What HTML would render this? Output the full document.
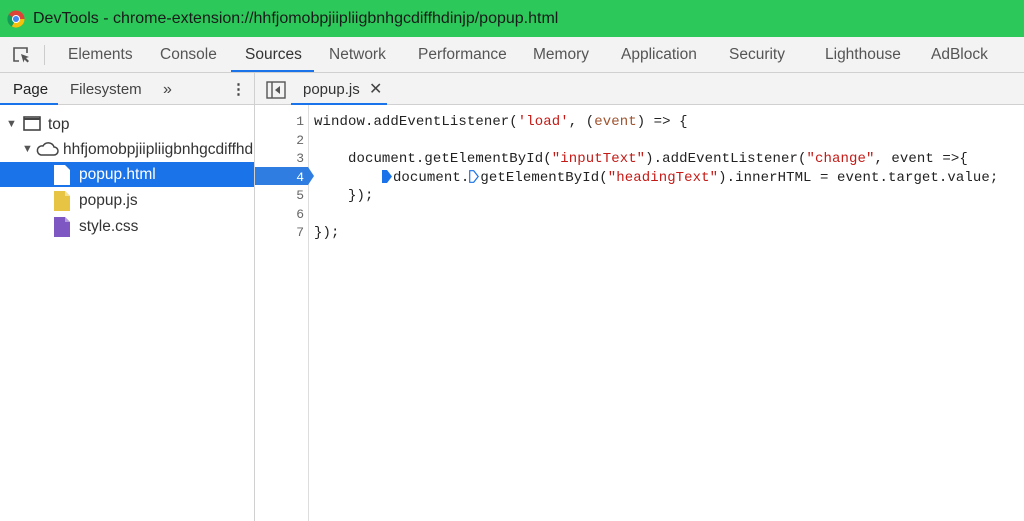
<!DOCTYPE html>
<html><head><style>
*{margin:0;padding:0;box-sizing:border-box}
body{width:1024px;height:521px;overflow:hidden;background:#fff;font-family:"Liberation Sans",sans-serif;position:relative}
.abs{position:absolute}
.title{left:0;top:0;width:1024px;height:37px;background:#2cc85a;color:#1a1a1a;font-size:16px;line-height:37px;padding-left:33px}
.tabs{left:0;top:37px;width:1024px;height:36px;background:#f3f3f3;border-bottom:1px solid #d0d0d0}
.tab{position:absolute;top:0;line-height:36px;font-size:15.5px;color:#555}
.row2{left:0;top:73px;width:1024px;height:32px;background:#f3f3f3;border-bottom:1px solid #d0d0d0}
.r2{position:absolute;top:0;line-height:33px;font-size:15px;color:#444}
.left{left:0;top:105px;width:255px;height:416px;border-right:1px solid #d0d0d0}
.tree{position:absolute;font-size:15.5px;color:#333;line-height:25px}
.code{font-family:"Liberation Mono",monospace;font-size:14px;letter-spacing:0.09px;color:#222;white-space:pre;position:absolute;left:314px;line-height:18.5px}
.ln{position:absolute;left:256px;width:48px;text-align:right;font-family:"Liberation Mono",monospace;font-size:13px;color:#666;line-height:18.5px}
.s{color:#c41a16}.k{color:#a0522d}
.mk{display:inline-block;width:10px;height:13px;vertical-align:-2px;margin-right:1px}
</style></head><body>
<div class="abs title">DevTools - chrome-extension://hhfjomobpjiipliigbnhgcdiffhdinjp/popup.html</div>
<svg class="abs" style="left:7px;top:10px" width="18" height="18" viewBox="0 0 18 18"><circle cx="9" cy="9" r="8.5" fill="#db4437"/><path d="M9 9 L17.5 9 A8.5 8.5 0 0 1 4.75 16.4Z" fill="#f4c20d"/><path d="M9 9 L4.75 16.4 A8.5 8.5 0 0 1 1.6 4.7Z" fill="#0f9d58"/><circle cx="9" cy="9" r="4" fill="#fff"/><circle cx="9" cy="9" r="3" fill="#4285f4"/></svg>
<div class="abs tabs">
<svg style="position:absolute;left:12px;top:9px" width="20" height="20" viewBox="0 0 20 20"><path d="M7 15H2V2h13v5" fill="none" stroke="#555" stroke-width="1.6"/><path d="M9 8l8 3-3 1 3 3-1.5 1.5-3-3-1 3z" fill="#555"/></svg>
<div style="position:absolute;left:44px;top:8px;width:1px;height:20px;background:#ccc"></div>
<div class="tab" style="left:68px">Elements</div>
<div class="tab" style="left:160px">Console</div>
<div class="tab" style="left:245px;color:#333">Sources</div>
<div style="position:absolute;left:231px;top:33px;width:83px;height:2px;background:#1a73e8"></div>
<div class="tab" style="left:329px">Network</div>
<div class="tab" style="left:418px">Performance</div>
<div class="tab" style="left:533px">Memory</div>
<div class="tab" style="left:621px">Application</div>
<div class="tab" style="left:729px">Security</div>
<div class="tab" style="left:825px">Lighthouse</div>
<div class="tab" style="left:931px">AdBlock</div>
</div>
<div class="abs row2">
<div class="r2" style="left:13px;color:#222">Page</div>
<div style="position:absolute;left:0;top:30px;width:58px;height:2px;background:#1a73e8"></div>
<div class="r2" style="left:70px">Filesystem</div>
<div class="r2" style="left:163px;font-size:16px">»</div>
<div class="r2" style="left:231px;font-weight:bold">⋮</div>
<div style="position:absolute;left:254px;top:0;width:1px;height:32px;background:#d0d0d0"></div>
<svg style="position:absolute;left:266px;top:8px" width="20" height="18" viewBox="0 0 20 18"><rect x="1" y="1" width="18" height="16" fill="none" stroke="#555" stroke-width="1.4"/><line x1="6" y1="1" x2="6" y2="17" stroke="#555" stroke-width="1.4"/><path d="M14 5v8l-5-4z" fill="#555"/></svg>
<div class="r2" style="left:303px;color:#333">popup.js</div>
<div class="r2" style="left:369px;font-size:16px;color:#444">✕</div>
<div style="position:absolute;left:291px;top:30px;width:96px;height:2px;background:#1a73e8"></div>
</div>
<div class="abs left"></div>
<div class="abs" style="left:0;top:162px;width:254px;height:25px;background:#1a73e8"></div>
<div class="tree" style="left:6px;top:112px;font-size:11px;color:#555">▼</div>
<svg class="abs" style="left:23px;top:116px" width="18" height="15"><rect x="1" y="1" width="16" height="13" fill="none" stroke="#444" stroke-width="1.6"/><line x1="1" y1="3" x2="17" y2="3" stroke="#444" stroke-width="2"/></svg>
<div class="tree" style="left:48px;top:112px">top</div>
<div class="tree" style="left:22px;top:137px;font-size:11px;color:#555">▼</div>
<svg class="abs" style="left:35px;top:141px" width="25" height="16"><path d="M6 14h13a4 4 0 0 0 0-8 6 6 0 0 0-11-1 4.5 4.5 0 0 0-2 9z" fill="none" stroke="#444" stroke-width="1.5"/></svg>
<div class="tree" style="left:63px;top:137px;width:191px;overflow:hidden;white-space:nowrap">hhfjomobpjiipliigbnhgcdiffhdinjp</div>
<svg class="abs" style="left:54px;top:165px" width="16" height="20"><path d="M0 0h11l5 5v15H0z" fill="#fff"/></svg>
<div class="tree" style="left:79px;top:162px;color:#fff">popup.html</div>
<svg class="abs" style="left:54px;top:191px" width="16" height="20"><path d="M0 0h11l5 5v15H0z" fill="#e8c444"/><path d="M11 0v5h5z" fill="#f5e29a"/></svg>
<div class="tree" style="left:79px;top:188px">popup.js</div>
<svg class="abs" style="left:54px;top:217px" width="16" height="20"><path d="M0 0h11l5 5v15H0z" fill="#7e57c2"/><path d="M11 0v5h5z" fill="#b39ddb"/></svg>
<div class="tree" style="left:79px;top:214px">style.css</div>
<div class="abs" style="left:308px;top:105px;width:1px;height:416px;background:#ddd"></div>
<svg class="abs" style="left:255px;top:167px" width="60" height="18"><path d="M0 0h53l6 9-6 9H0z" fill="#2f7de1"/></svg>
<div class="ln" style="top:113px">1<br>2<br>3<br><span style="color:#fff">4</span><br>5<br>6<br>7</div>
<div class="code" style="top:113px">window.addEventListener(<span class="s">'load'</span>, (<span class="k">event</span>) => {

    document.getElementById(<span class="s">"inputText"</span>).addEventListener(<span class="s">"change"</span>, event =>{
        <svg class="mk" viewBox="0 0 10 13"><path d="M0 0h5l5 6.5-5 6.5H0z" fill="#1a73e8"/></svg>document.<svg class="mk" viewBox="0 0 10 13"><path d="M0.7 0.7h4l4.5 5.8-4.5 5.8h-4z" fill="none" stroke="#1a73e8" stroke-width="1.2"/></svg>getElementById(<span class="s">"headingText"</span>).innerHTML = event.target.value;
    });

});</div>
</body></html>
